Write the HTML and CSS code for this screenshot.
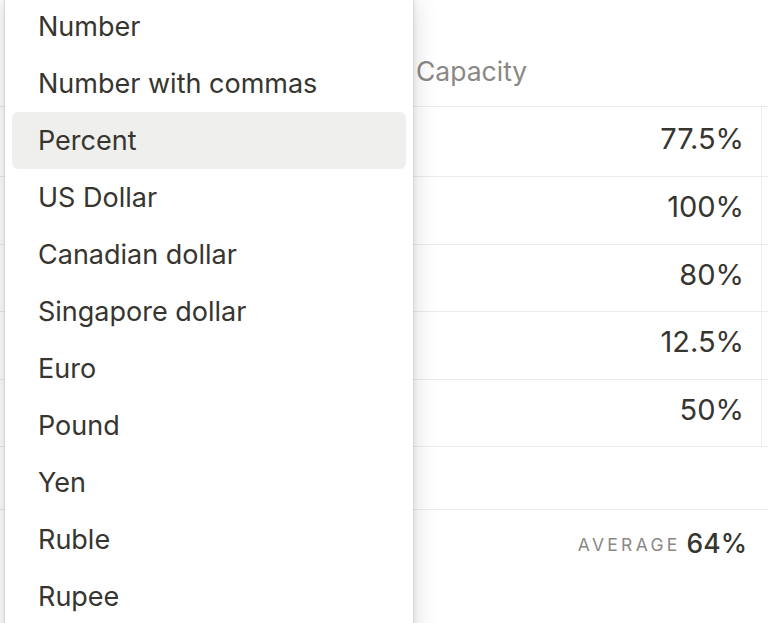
FILE: index.html
```html
<!DOCTYPE html>
<html lang="en">
<head>
    <meta charset="UTF-8">
    <title>Number format</title>
    <link rel="stylesheet" href="styles.css">
</head>
<body>
  <main class="table">
    <div class="row head">
      <div class="cell name"></div>
      <div class="cell capacity">Capacity</div>
      <div class="cell rest"></div>
    </div>
    <div class="row first"><div class="cell name"></div><div class="cell capacity num">77.5%</div><div class="cell rest"></div></div>
    <div class="row"><div class="cell name"></div><div class="cell capacity num">100%</div><div class="cell rest"></div></div>
    <div class="row"><div class="cell name"></div><div class="cell capacity num">80%</div><div class="cell rest"></div></div>
    <div class="row"><div class="cell name"></div><div class="cell capacity num">12.5%</div><div class="cell rest"></div></div>
    <div class="row"><div class="cell name"></div><div class="cell capacity num">50%</div><div class="cell rest"></div></div>
    <div class="row blank"></div>
    <div class="row footer">
      <div class="cell name"></div>
      <div class="cell capacity calc"><span class="calc-label">Average</span> <span class="calc-value">64%</span></div>
    </div>
  </main>

  <!-- Format menu over the table -->
  <ul class="menu">
    <li>Number</li>
    <li>Number with commas</li>
    <li class="active">Percent</li>
    <li>US Dollar</li>
    <li>Canadian dollar</li>
    <li>Singapore dollar</li>
    <li>Euro</li>
    <li>Pound</li>
    <li>Yen</li>
    <li>Ruble</li>
    <li>Rupee</li>
  </ul>
</body>
</html>
```

FILE: styles.css
```css
body {
  margin: 0;
  background: white;
  font-family: Inter, "Noto Sans", sans-serif;
  color: #37352f;
  overflow: hidden;
}

/* Table behind the menu */
.table {
  display: flex;
  flex-direction: column;
}

.row {
  display: flex;
  height: 67.5px;
  border-bottom: 1px solid #ebebea;
  box-sizing: border-box;
}

.row.head {
  height: 107px;
  align-items: flex-end;
}

.row.first {
  height: 70px;
}

.row.blank {
  height: 63px;
}

.row.footer {
  border-bottom: none;
  height: 72px;
}

.cell {
  display: flex;
  align-items: center;
  box-sizing: border-box;
}

.name {
  width: 400px;
}

.capacity {
  width: 362px;
  padding: 0 17px 7px 16px;
  font-size: 29px;
  border-right: 1px solid #ebebea;
  justify-content: flex-end;
}

.head .capacity {
  justify-content: flex-start;
  color: #8a8884;
  font-size: 26.5px;
  height: 70px;
  border-right: none;
  padding-bottom: 1px;
}

.footer .capacity {
  border-right: none;
  padding-right: 15px;
  padding-bottom: 6px;
  align-items: center;
}

.rest {
  flex: 1;
}

.head .rest {
  height: 70px;
}

.calc-label {
  font-size: 17.5px;
  letter-spacing: 3.3px;
  text-transform: uppercase;
  color: #8a8884;
  margin-right: 6px;
  padding-top: 3px;
}

.calc-value {
  font-size: 26.5px;
  font-weight: 500;
}

/* Number format menu */
.menu {
  position: absolute;
  left: 5px;
  top: -10px;
  width: 408px;
  height: 660px;
  margin: 0;
  padding: 7.5px 7px;
  box-sizing: border-box;
  list-style: none;
  background: white;
  box-shadow: 0 0 0 1px rgba(15,15,15,0.06), 0 3px 6px rgba(15,15,15,0.08), 0 9px 24px rgba(15,15,15,0.16);
}

.menu li {
  height: 57px;
  display: flex;
  align-items: center;
  padding-left: 26px;
  font-size: 27px;
  border-radius: 6px;
}

.menu li.active {
  background: #efefee;
}
```
